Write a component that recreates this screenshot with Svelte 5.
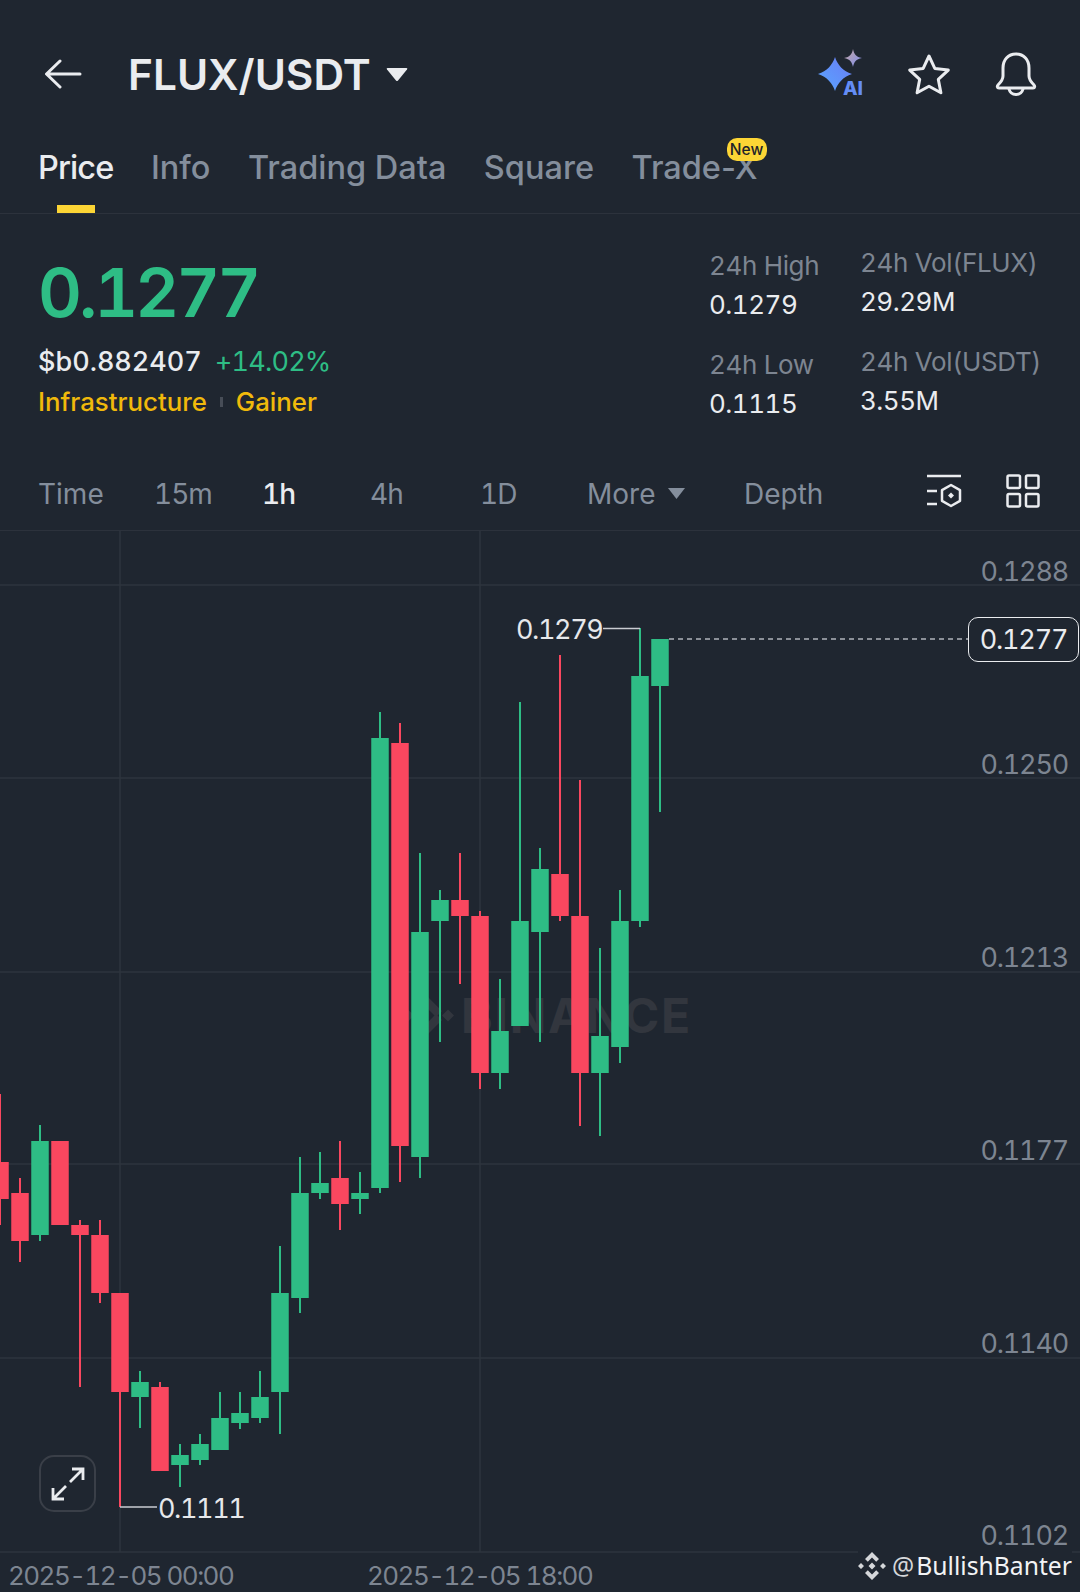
<script lang="ts">
  // [centre x, wick top, wick bottom, body top, body bottom, up?]
  const candles: [number, number, number, number, number, boolean][] = [
    [0, 1094, 1225, 1162, 1199, false],
    [20, 1178, 1262, 1193, 1241, false],
    [40, 1125, 1241, 1141, 1235, true],
    [60, 1141, 1225, 1141, 1225, false],
    [80, 1220, 1387, 1225, 1235, false],
    [100, 1220, 1303, 1235, 1293, false],
    [120, 1293, 1507, 1293, 1392, false],
    [140, 1371, 1428, 1382, 1397, true],
    [160, 1382, 1471, 1387, 1471, false],
    [180, 1444, 1487, 1455, 1465, true],
    [200, 1434, 1465, 1444, 1460, true],
    [220, 1392, 1450, 1418, 1450, true],
    [240, 1392, 1429, 1413, 1423, true],
    [260, 1371, 1423, 1397, 1418, true],
    [280, 1246, 1434, 1293, 1392, true],
    [300, 1157, 1313, 1193, 1298, true],
    [320, 1152, 1199, 1183, 1193, true],
    [340, 1141, 1230, 1178, 1204, false],
    [360, 1172, 1214, 1193, 1199, true],
    [380, 712, 1193, 738, 1188, true],
    [400, 723, 1182, 743, 1146, false],
    [420, 853, 1178, 932, 1157, true],
    [440, 890, 1042, 900, 921, true],
    [460, 853, 984, 900, 916, false],
    [480, 911, 1089, 916, 1073, false],
    [500, 979, 1089, 1031, 1073, true],
    [520, 702, 1026, 921, 1026, true],
    [540, 848, 1042, 869, 932, true],
    [560, 655, 921, 874, 916, false],
    [580, 780, 1126, 916, 1073, false],
    [600, 948, 1136, 1036, 1073, true],
    [620, 890, 1063, 921, 1047, true],
    [640, 628, 927, 676, 921, true],
    [660, 639, 812, 639, 686, true],
  ];

  const gridY = [585, 778, 972, 1164, 1358, 1552];
  const axis = [
    { label: "0.1288", y: 581 },
    { label: "0.1250", y: 774 },
    { label: "0.1213", y: 967 },
    { label: "0.1177", y: 1160 },
    { label: "0.1140", y: 1353 },
    { label: "0.1102", y: 1545 },
  ];
  const intervals = [
    { label: "Time" },
    { label: "15m", num: true },
    { label: "1h", num: true, active: true },
    { label: "4h", num: true },
    { label: "1D", num: true },
    { label: "More", caret: true },
    { label: "Depth" },
  ];
  const tabs = ["Price", "Info", "Trading Data", "Square", "Trade-X"];
</script>

<div class="page">
  <header class="top">
    <svg class="back" width="38" height="30" viewBox="0 0 38 30" fill="none" stroke="#eaecef" stroke-width="3" stroke-linecap="round" stroke-linejoin="round">
      <path d="M36 15H3M16 2 2.500 15 16 28" />
    </svg>
    <h1>FLUX/USDT</h1>
    <svg class="caret" width="22" height="15" viewBox="0 0 22 15"><path d="M1.500 1h19q1.500 0 .5 1.500l-9 11q-1 1-2 0l-9-11Q0 1 1.500 1z" fill="#eaecef" /></svg>
    <div class="top-icons">
      <svg class="ai" width="52" height="52" viewBox="0 0 52 52">
        <defs>
          <linearGradient id="aiBlue" x1="0" y1="1" x2="1" y2="0">
            <stop offset="0" stop-color="#58a6ff" />
            <stop offset="1" stop-color="#6a7cf5" />
          </linearGradient>
          <linearGradient id="aiSmall" x1="0" y1="0" x2="1" y2="1">
            <stop offset="0" stop-color="#c9a7a0" />
            <stop offset="1" stop-color="#7c8ef0" />
          </linearGradient>
        </defs>
        <path d="M18 9C20.500 17 26 23 35 26 26 29 20.500 35 18 43 15.500 35 10 29 1 26 10 23 15.500 17 18 9z" fill="url(#aiBlue)" />
        <path d="M36 1C37 6 39 9 45 10 39 11 37 14 36 19 35 14 33 11 27 10 33 9 35 6 36 1z" fill="url(#aiSmall)" />
        <text x="26" y="47" class="ai-text">AI</text>
      </svg>
      <svg class="star" width="44" height="42" viewBox="0 0 44 42" fill="none" stroke="#eaecef" stroke-width="3" stroke-linejoin="round">
        <path d="M22 3l5.800 12.400 13.500 1.700-10 9.300 2.600 13.400L22 33.200 10.100 39.800l2.600-13.400-10-9.300 13.500-1.700z" />
      </svg>
      <svg class="bell" width="42" height="44" viewBox="0 0 42 44" fill="none" stroke="#eaecef" stroke-width="3" stroke-linejoin="round" stroke-linecap="round">
        <path d="M21 2C13 2 8 8 8 16v8c0 4-2 6-5 9-1 1-1 3 1 3h34c2 0 2-2 1-3-3-3-5-5-5-9v-8C34 8 29 2 21 2z" />
        <path d="M14 37c1 4 4 5.500 7 5.500s6-1.500 7-5.500" />
      </svg>
    </div>
  </header>

  <nav class="tabs">
    {#each tabs as tab, i}
      <span class="tab" class:active={i === 0}>
        {tab}
        {#if tab === "Trade-X"}<span class="new">New</span>{/if}
      </span>
    {/each}
  </nav>

  <section class="stats">
    <div class="price-block">
      <div class="last">0.1277</div>
      <div class="sub"><span class="fiat">$b0.882407</span><span class="change">+14.02%</span></div>
      <div class="tags"><span>Infrastructure</span><i></i><span>Gainer</span></div>
    </div>
    <div class="col col-a">
      <div class="lbl">24h High</div>
      <div class="val">0.1279</div>
      <div class="lbl second">24h Low</div>
      <div class="val">0.1115</div>
    </div>
    <div class="col col-b">
      <div class="lbl">24h Vol(FLUX)</div>
      <div class="val">29.29M</div>
      <div class="lbl second">24h Vol(USDT)</div>
      <div class="val">3.55M</div>
    </div>
  </section>

  <div class="intervals">
    {#each intervals as it}
      <span class="interval" class:on={it.active} class:num={it.num}>
        {it.label}
        {#if it.caret}<svg width="17" height="11" viewBox="0 0 17 11"><path d="M0 0h17l-8.500 11z" fill="#848e9c" /></svg>{/if}
      </span>
    {/each}
    <div class="tools">
      <svg width="36" height="34" viewBox="0 0 36 34" fill="none" stroke="#eaecef" stroke-width="2.500">
        <path d="M1 2h34M1 17h10M1 30h10" />
        <path d="M25 11l9 5.200v10.600L25 32l-9-5.200V16.200z" stroke-linejoin="round" />
        <path d="M25 18.500l3 3-3 3-3-3z" fill="#eaecef" stroke="none" />
      </svg>
      <svg width="34" height="34" viewBox="0 0 34 34" fill="none" stroke="#eaecef" stroke-width="2.500">
        <rect x="1.500" y="1.500" width="12.500" height="12.500" rx="1.500" />
        <rect x="20" y="1.500" width="12.500" height="12.500" rx="1.500" />
        <rect x="1.500" y="20" width="12.500" height="12.500" rx="1.500" />
        <rect x="20" y="20" width="12.500" height="12.500" rx="1.500" />
      </svg>
    </div>
  </div>

  <div class="chart">
    <svg class="plot" width="1080" height="1061" viewBox="0 531 1080 1061">
      {#each gridY as y}
        <line x1="0" x2="1080" y1={y} y2={y} class="grid" />
      {/each}
      <line x1="120" x2="120" y1="531" y2="1552" class="grid" />
      <line x1="480" x2="480" y1="531" y2="1552" class="grid" />

      <!-- watermark sits under the candles -->
      <g fill="#32363e">
        <path d="M428 997l14 14-6 6-8-8-8 8-6-6z" />
        <path d="M428 1034l14-14-6-6-8 8-8-8-6 6z" />
        <path d="M442 1015.500l6-6 6 6-6 6zM402 1015.500l6-6 6 6-6 6z" />
      </g>
      <text x="461" y="1033" class="mark">BINANCE</text>

      {#each candles as [x, wt, wb, bt, bb, up]}
        <rect x={x - 1} y={wt} width="2" height={wb - wt} class={up ? "up" : "down"} />
        <rect x={x - 8.750} y={bt} width="17.500" height={bb - bt} class={up ? "up" : "down"} />
      {/each}

      <path d="M603 628.500H640M120 1507H157" class="hl" />
      <text x="516" y="639" class="note">0.1279</text>
      <text x="158" y="1518" class="note">0.1111</text>
      <line x1="669" x2="969" y1="639" y2="639" class="last-line" />

      {#each axis as a}
        <text x="1068" y={a.y} text-anchor="end" class="tick">{a.label}</text>
      {/each}
      <text x="8" y="1585" class="tick date">2025-12-05 00:00</text>
      <text x="367" y="1585" class="tick date">2025-12-05 18:00</text>
    </svg>

    <div class="price-tag">0.1277</div>

    <button class="expand" aria-label="Expand">
      <svg width="36" height="36" viewBox="0 0 36 36" fill="none" stroke="#eaecef" stroke-width="2.800">
        <path d="M20 16 33 3M22 3h11v11M16 20 3 33M14 33H3V22" />
      </svg>
    </button>

    <div class="credit">
      <svg width="28" height="28" viewBox="0 0 28 28" fill="#d5d7da">
        <path d="M14 0l7 7-2.800 2.800L14 5.600 9.800 9.800 7 7z" />
        <path d="M14 28l7-7-2.800-2.800L14 22.400l-4.200-4.200L7 21z" />
        <path d="M14 10.500l3.500 3.500-3.500 3.500-3.500-3.500zM3 11l3 3-3 3-3-3zM25 11l3 3-3 3-3-3z" />
      </svg>
      <span class="at">@</span><span>BullishBanter</span>
    </div>
  </div>
</div>

<style>
  :global(body) {
    margin: 0;
    background: #1f2630;
  }

  .page {
    width: 1080px;
    height: 1592px;
    overflow: hidden;
    display: flex;
    flex-direction: column;
    background: #1f2630;
    color: #eaecef;
    font-family: Inter, "Liberation Sans", sans-serif;
    font-variant-numeric: tabular-nums;
  }

  .top {
    height: 148px;
    display: flex;
    align-items: center;
    padding: 0 43px 0 44px;
    box-sizing: border-box;
  }
  .back {
    margin-right: 46px;
  }
  h1 {
    margin: 0 15px 0 0;
    font-size: 42.400px;
    font-weight: 600;
  }
  .top-icons {
    margin-left: auto;
    display: flex;
    align-items: center;
  }
  .ai {
    margin-right: 38px;
  }
  .ai-text {
    font-size: 19px;
    font-weight: 800;
    fill: #648df5;
  }
  .star {
    margin-right: 44px;
  }

  .tabs {
    height: 66px;
    display: flex;
    gap: 37.500px;
    padding: 0 0 0 38px;
    box-sizing: border-box;
    border-bottom: 1px solid #2c323c;
    font-size: 32.500px;
    font-weight: 500;
    font-variant-numeric: normal;
    color: #848e9c;
    line-height: 40px;
  }
  .tab {
    position: relative;
    height: 65px;
  }
  .tab.active {
    color: #eaecef;
    letter-spacing: -0.900px;
  }
  .tab.active::after {
    content: "";
    position: absolute;
    left: 19px;
    bottom: 0;
    width: 38px;
    height: 8px;
    background: #fcd535;
  }
  .new {
    position: absolute;
    right: -9px;
    top: -10px;
    width: 40px;
    height: 23px;
    border-radius: 10px;
    background: #fcd535;
    color: #1e2329;
    font-size: 15.500px;
    font-weight: 500;
    line-height: 23px;
    text-align: center;
  }

  .stats {
    height: 237px;
    display: grid;
    grid-template-columns: 671px 151px 1fr;
    padding-left: 38px;
    box-sizing: border-box;
  }
  .last {
    margin-top: 43px;
    font-size: 68px;
    font-weight: 600;
    line-height: 70px;
    letter-spacing: -3px;
    color: #2ebd85;
  }
  .sub {
    margin-top: 18px;
    display: flex;
    gap: 13px;
    font-size: 27px;
    line-height: 34px;
  }
  .fiat {
    font-weight: 500;
  }
  .change {
    letter-spacing: -0.800px;
    color: #2ebd85;
  }
  .tags {
    margin-top: 6px;
    display: flex;
    align-items: center;
    font-size: 25.800px;
    font-weight: 500;
    line-height: 34px;
    color: #f0b90b;
  }
  .tags i {
    width: 3px;
    height: 10px;
    margin: 0 13px;
    background: #474d57;
  }
  .col {
    font-size: 26px;
    line-height: 34px;
    letter-spacing: -0.500px;
  }
  .col-a {
    padding-top: 35px;
  }
  .col-b {
    padding-top: 32px;
  }
  .lbl {
    letter-spacing: -0.350px;
    color: #7d8591;
  }
  .val {
    margin-top: 5px;
    color: #eaecef;
  }
  .second {
    margin-top: 26px;
  }

  .intervals {
    height: 80px;
    padding: 6px 40px 0 38px;
    display: grid;
    grid-template-columns: 116px 108px 108px 110px 107px 157px 1fr auto;
    align-items: center;
    box-sizing: border-box;
    border-bottom: 1px solid #2c323c;
    font-size: 28px;
    color: #848e9c;
  }
  .interval {
    display: flex;
    align-items: center;
    gap: 13px;
  }
  .interval.num {
    letter-spacing: -1px;
  }
  .interval.on {
    color: #eaecef;
    font-weight: 500;
  }
  .tools {
    display: flex;
    align-items: center;
    gap: 44px;
    margin-top: -6px;
  }

  .chart {
    position: relative;
    flex: 1;
  }
  .plot {
    display: block;
  }
  .grid {
    stroke: #2e343e;
    stroke-width: 1.500;
  }
  .up {
    fill: #2ebd85;
  }
  .down {
    fill: #f9475f;
  }
  .mark {
    font-size: 48px;
    font-weight: 700;
    letter-spacing: 1.700px;
    fill: #32363e;
  }
  .hl {
    stroke: #c9ccd1;
    stroke-width: 1.500;
    fill: none;
  }
  .note {
    font-size: 27px;
    letter-spacing: -1.400px;
    fill: #e6e8eb;
  }
  .last-line {
    stroke: #b0b4ba;
    stroke-width: 1.500;
    stroke-dasharray: 5 4;
  }
  .tick {
    font-size: 27px;
    letter-spacing: -1.200px;
    fill: #7d8591;
  }
  .date {
    font-size: 26px;
    letter-spacing: -1.550px;
  }

  .price-tag {
    position: absolute;
    right: 1px;
    top: 86px;
    width: 109px;
    height: 43px;
    border: 1.500px solid #eaecef;
    border-radius: 10px;
    font-size: 27px;
    letter-spacing: -1.200px;
    line-height: 43px;
    text-align: center;
    background: #1f2630;
  }
  .expand {
    position: absolute;
    left: 39px;
    top: 924px;
    width: 57px;
    height: 57px;
    padding: 0;
    display: flex;
    align-items: center;
    justify-content: center;
    border: 2px solid #3a3f48;
    border-radius: 15px;
    background: transparent;
  }
  .credit {
    position: absolute;
    right: 8px;
    bottom: 11px;
    display: flex;
    align-items: center;
    gap: 5px;
    font-family: "Noto Sans", sans-serif;
    font-size: 24.700px;
    line-height: 30px;
    color: #f2f3f5;
    background: #1f2630;
  }
  .credit svg {
    margin-right: 1px;
  }
  .at {
    margin-right: -3px;
    color: #d5d7da;
  }
</style>
